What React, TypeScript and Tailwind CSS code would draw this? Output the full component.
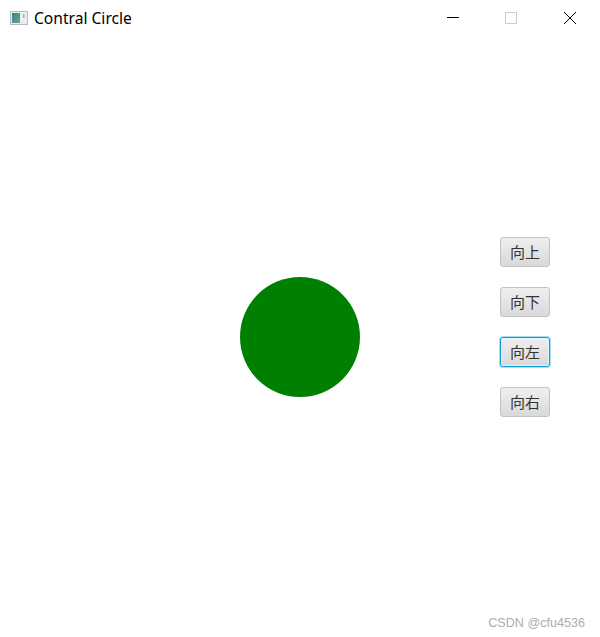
function Btn({ label, focused }: { label: string; focused?: boolean }) {
  return (
    <button
      className={
        "h-[30px] w-[50px] rounded-[3px] border bg-gradient-to-b from-[#efefef] to-[#d9d9d9] text-[15px] leading-none text-[#333333] " +
        (focused ? "border-[#0a9fd8] shadow-[0_0_0_1px_#a8def2,inset_0_0_0_1px_#e6f5fb]" : "border-[#c2c2c2]")
      }
    >
      {label}
    </button>
  )
}

export default function App() {
  return (
    <div className="relative h-[637px] w-[600px] overflow-hidden bg-white font-['Open_Sans','Noto_Sans_CJK_SC',sans-serif]">
      <header className="flex h-[36px] items-center pl-[10px]">
        <svg width="18" height="14" viewBox="0 0 18 14" className="mt-[-1px] shrink-0">
          <defs>
            <linearGradient id="ic" x1="0" y1="0" x2="1" y2="1">
              <stop offset="0" stopColor="#3d7f8f" />
              <stop offset="1" stopColor="#6fa88a" />
            </linearGradient>
          </defs>
          <rect x="0.5" y="0.5" width="17" height="13" fill="#e9eef0" stroke="#b4bcc1" />
          <rect x="2" y="2" width="8" height="10" fill="url(#ic)" />
          <rect x="13" y="3" width="1.5" height="4" fill="#9db8b8" />
        </svg>
        <span className="ml-[6px] mt-[1px] text-[15.6px] leading-none text-black font-['Noto_Sans',sans-serif]">Contral Circle</span>
        <div className="ml-auto flex">
          <svg width="12" height="12" viewBox="0 0 12 12" className="mr-[46px]">
            <path d="M0 5.5H12" stroke="#000" strokeWidth="1" />
          </svg>
          <svg width="12" height="12" viewBox="0 0 12 12" className="mr-[47px]">
            <rect x="0.5" y="0.5" width="11" height="11" fill="none" stroke="#cccccc" />
          </svg>
          <svg width="12" height="12" viewBox="0 0 12 12" className="mr-[24px]">
            <path d="M0 0L12 12M12 0L0 12" stroke="#000" strokeWidth="1" />
          </svg>
        </div>
      </header>

      <main className="flex items-start">
        <div className="ml-[240px] mt-[241px] h-[120px] w-[120px] rounded-full bg-[#008000]" />
        <div className="ml-[140px] mt-[201px] flex flex-col gap-[20px]">
          <Btn label="向上" />
          <Btn label="向下" />
          <Btn label="向左" focused />
          <Btn label="向右" />
        </div>
      </main>

      <div className="absolute bottom-[6px] right-[15px] text-[12.6px] leading-[15px] text-[#adadad] font-['Liberation_Sans',sans-serif]">
        CSDN @cfu4536
      </div>
    </div>
  )
}
